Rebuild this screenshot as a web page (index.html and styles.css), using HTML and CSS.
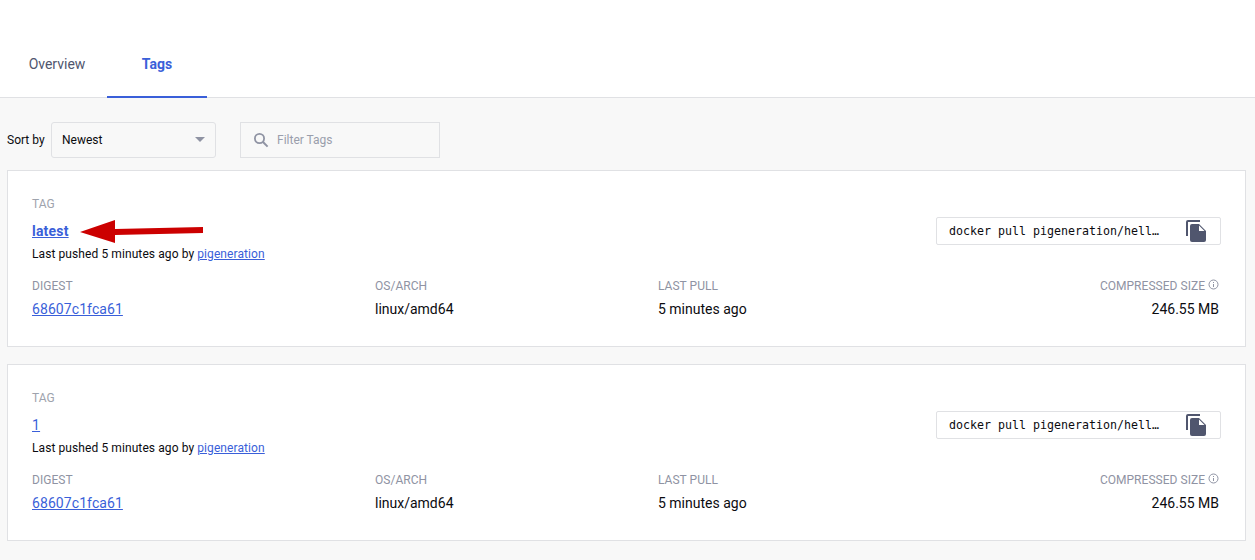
FILE: index.html
```html
<!DOCTYPE html>
<html lang="en">
<head>
<meta charset="utf-8">
<title>Tags</title>
<link rel="stylesheet" href="styles.css">
</head>
<body>
<nav class="tabs">
  <a class="tab">Overview</a>
  <a class="tab active">Tags</a>
</nav>
<main class="content">
  <div class="toolbar">
    <label class="sort-label">Sort by</label>
    <div class="select">Newest<span class="caret"></span></div>
    <div class="filter">
      <svg class="search" width="16" height="16" viewBox="0 0 16 16"><circle cx="6.5" cy="6.5" r="4.6" fill="none" stroke="#8f93a3" stroke-width="1.8"/><path d="M10 10l4.6 4.6" stroke="#8f93a3" stroke-width="2"/></svg>
      <span>Filter Tags</span>
    </div>
  </div>

  <section class="card">
    <div class="top">
      <div>
        <div class="label tag-label">TAG</div>
        <a class="tag-name bold">latest</a>
        <div class="pushed">Last pushed 5 minutes ago by <a class="link">pigeneration</a></div>
      </div>
      <div class="pull">
        <code>docker pull pigeneration/hell…</code>
        <svg class="copy" width="24" height="24" viewBox="0 0 24 24"><path d="M16 2H4a2 2 0 0 0-2 2v14h2V4h12z" fill="#50566e"/><path d="M15 6H8a2 2 0 0 0-2 2v14a2 2 0 0 0 2 2h12a2 2 0 0 0 2-2V13z" fill="#50566e"/><path d="M15 7.500V13h5.500z" fill="#fff"/></svg>
      </div>
    </div>
    <div class="meta">
      <div><div class="label">DIGEST</div><a class="value link">68607c1fca61</a></div>
      <div><div class="label">OS/ARCH</div><div class="value">linux/amd64</div></div>
      <div><div class="label">LAST PULL</div><div class="value">5 minutes ago</div></div>
      <div class="right"><div class="label">COMPRESSED SIZE <svg class="info" width="11" height="11" viewBox="0 0 11 11"><circle cx="5.500" cy="5.500" r="4.500" fill="none" stroke="#8f93a3"/><path d="M5.500 5v3M5.500 3v1" stroke="#8f93a3"/></svg></div><div class="value">246.55 MB</div></div>
    </div>
    <svg class="arrow" width="124" height="24" viewBox="0 0 124 24"><path d="M0 12L35 0V9L123 7V13L35 15V23Z" fill="#cc0000"/></svg>
  </section>

  <section class="card">
    <div class="top">
      <div>
        <div class="label tag-label">TAG</div>
        <a class="tag-name">1</a>
        <div class="pushed">Last pushed 5 minutes ago by <a class="link">pigeneration</a></div>
      </div>
      <div class="pull">
        <code>docker pull pigeneration/hell…</code>
        <svg class="copy" width="24" height="24" viewBox="0 0 24 24"><path d="M16 2H4a2 2 0 0 0-2 2v14h2V4h12z" fill="#50566e"/><path d="M15 6H8a2 2 0 0 0-2 2v14a2 2 0 0 0 2 2h12a2 2 0 0 0 2-2V13z" fill="#50566e"/><path d="M15 7.500V13h5.500z" fill="#fff"/></svg>
      </div>
    </div>
    <div class="meta">
      <div><div class="label">DIGEST</div><a class="value link">68607c1fca61</a></div>
      <div><div class="label">OS/ARCH</div><div class="value">linux/amd64</div></div>
      <div><div class="label">LAST PULL</div><div class="value">5 minutes ago</div></div>
      <div class="right"><div class="label">COMPRESSED SIZE <svg class="info" width="11" height="11" viewBox="0 0 11 11"><circle cx="5.500" cy="5.500" r="4.500" fill="none" stroke="#8f93a3"/><path d="M5.500 5v3M5.500 3v1" stroke="#8f93a3"/></svg></div><div class="value">246.55 MB</div></div>
    </div>
  </section>
</main>
</body>
</html>
```

FILE: styles.css
```css
* { box-sizing: border-box; }
html, body { margin: 0; height: 100%; }
body {
  font-family: Roboto, "Liberation Sans", sans-serif;
  color: #0b0b0f;
  background: #f8f8f8;
  overflow: hidden;
}
.tabs {
  display: flex;
  height: 98px;
  padding-left: 7px;
  background: #fff;
  border-bottom: 1px solid #e0e1e4;
}
.tab {
  width: 100px;
  height: 98px;
  padding-top: 56px;
  font-size: 14px;
  line-height: 16px;
  text-align: center;
  color: #50566e;
}
.tab.active {
  color: #3a5fd9;
  font-weight: 700;
  border-bottom: 2px solid #3a5fd9;
}
.content { padding: 24px 9px 0 7px; }
.toolbar {
  display: flex;
  align-items: center;
  height: 36px;
  margin-bottom: 12px;
  font-size: 12px;
}
.sort-label { width: 44px; }
.select {
  position: relative;
  width: 165px;
  height: 36px;
  padding-left: 10px;
  line-height: 34px;
  border: 1px solid #e0e1e4;
  border-radius: 3px;
}
.caret {
  position: absolute;
  right: 10px;
  top: 14px;
  border-left: 5px solid transparent;
  border-right: 5px solid transparent;
  border-top: 5px solid #8f93a3;
}
.filter {
  display: flex;
  align-items: center;
  gap: 8px;
  width: 200px;
  height: 36px;
  margin-left: 24px;
  padding-left: 12px;
  border: 1px solid #e0e1e4;
  color: #9a9eac;
}
.card {
  position: relative;
  height: 177px;
  margin-bottom: 17px;
  padding: 25px 24px 0;
  background: #fff;
  border: 1px solid #e0e1e4;
}
.top { display: flex; justify-content: space-between; }
.label { font-size: 12px; line-height: 16px; color: #8f93a3; letter-spacing: 0.03px; }
.tag-label { color: #9ea3ad; }
.tag-name {
  display: block;
  width: fit-content;
  margin-top: 10px;
  font-size: 14px;
  line-height: 18px;
  color: #3a5fd9;
  text-decoration: underline;
  letter-spacing: 0.2px;
}
.tag-name.bold { font-weight: 700; }
.pushed { margin-top: 7px; font-size: 12px; line-height: 14px; letter-spacing: 0.09px; }
.link { color: #3a5fd9; text-decoration: underline; }
.pull {
  display: flex;
  align-items: center;
  justify-content: space-between;
  width: 285px;
  height: 28px;
  margin-top: 21px;
  padding: 0 12px;
  border: 1px solid #e0e1e4;
  border-radius: 2px;
}
.copy { margin-top: -2px; }
code { font-family: "DejaVu Sans Mono", monospace; font-size: 11.63px; }
.meta {
  display: grid;
  grid-template-columns: 343px 283px 1fr 1fr;
  margin-top: 17px;
  padding-right: 2px;
}
.right { text-align: right; white-space: nowrap; }
.info { vertical-align: 0; }
.value {
  display: block;
  width: fit-content;
  margin-top: 7px;
  font-size: 14px;
  line-height: 16px;
}
.value.link { color: #3a5fd9; letter-spacing: 0.08px; }
.right .value { margin-left: auto; }
.arrow { position: absolute; left: 72px; top: 49px; }
```
